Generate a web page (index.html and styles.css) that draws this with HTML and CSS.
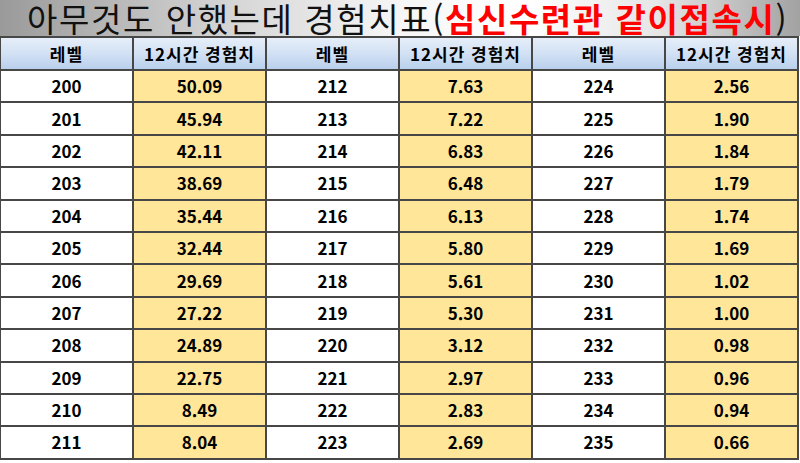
FILE: index.html
```html
<!DOCTYPE html>
<html lang="ko">
<head>
<meta charset="utf-8">
<link rel="stylesheet" href="styles.css">
</head>
<body>
<div class="page">
  <div class="title">아무것도 안했는데 경험치표(<span class="red">심신수련관 같이접속시</span>)</div>
  <table class="exp">
    <colgroup>
      <col class="c"><col class="c"><col class="c"><col class="c"><col class="c"><col class="c">
    </colgroup>
    <thead>
      <tr><th>레벨</th><th>12시간 경험치</th><th>레벨</th><th>12시간 경험치</th><th>레벨</th><th>12시간 경험치</th></tr>
    </thead>
    <tbody>
      <tr><td>200</td><td class="y">50.09</td><td>212</td><td class="y">7.63</td><td>224</td><td class="y">2.56</td></tr>
      <tr><td>201</td><td class="y">45.94</td><td>213</td><td class="y">7.22</td><td>225</td><td class="y">1.90</td></tr>
      <tr><td>202</td><td class="y">42.11</td><td>214</td><td class="y">6.83</td><td>226</td><td class="y">1.84</td></tr>
      <tr><td>203</td><td class="y">38.69</td><td>215</td><td class="y">6.48</td><td>227</td><td class="y">1.79</td></tr>
      <tr><td>204</td><td class="y">35.44</td><td>216</td><td class="y">6.13</td><td>228</td><td class="y">1.74</td></tr>
      <tr><td>205</td><td class="y">32.44</td><td>217</td><td class="y">5.80</td><td>229</td><td class="y">1.69</td></tr>
      <tr><td>206</td><td class="y">29.69</td><td>218</td><td class="y">5.61</td><td>230</td><td class="y">1.02</td></tr>
      <tr><td>207</td><td class="y">27.22</td><td>219</td><td class="y">5.30</td><td>231</td><td class="y">1.00</td></tr>
      <tr><td>208</td><td class="y">24.89</td><td>220</td><td class="y">3.12</td><td>232</td><td class="y">0.98</td></tr>
      <tr><td>209</td><td class="y">22.75</td><td>221</td><td class="y">2.97</td><td>233</td><td class="y">0.96</td></tr>
      <tr><td>210</td><td class="y">8.49</td><td>222</td><td class="y">2.83</td><td>234</td><td class="y">0.94</td></tr>
      <tr><td>211</td><td class="y">8.04</td><td>223</td><td class="y">2.69</td><td>235</td><td class="y">0.66</td></tr>
    </tbody>
  </table>
</div>
</body>
</html>
```

FILE: styles.css
```css
html, body {
  margin: 0;
  padding: 0;
  background: #ffffff;
}
.page {
  width: 800px;
  height: 463px;
  overflow: hidden;
  font-family: "Noto Sans CJK KR", "Noto Sans", sans-serif;
}
.title {
  height: 36px;
  box-sizing: border-box;
  padding-left: 27px;
  font-size: 33px;
  line-height: 36px;
  letter-spacing: 1.6px;
  color: #111;
  white-space: nowrap;
  background: linear-gradient(to right, #9a9a9a 0%, #d4d4d4 28%, #f6f6f6 50%, #ffffff 66%, #e6e6e6 82%, #a2a2a2 100%);
}
.title .red {
  color: #ff0000;
  font-weight: 700;
}
.exp {
  border-collapse: collapse;
  table-layout: fixed;
  width: 798px;
  margin-left: -1px;
}
.exp .c {
  width: 133px;
}
.exp th, .exp td {
  border: 2px solid #474747;
  text-align: center;
  font-weight: 700;
  font-size: 17px;
  color: #000;
  padding: 0;
  line-height: 20px;
}
.exp th {
  height: 31px;
  letter-spacing: 1px;
  background: linear-gradient(to bottom, #e6eef9 0%, #d2e1f4 50%, #b9d0ec 100%);
}
.exp td {
  height: 30.4px;
}
.exp td.y {
  background: #ffe699;
}
```
